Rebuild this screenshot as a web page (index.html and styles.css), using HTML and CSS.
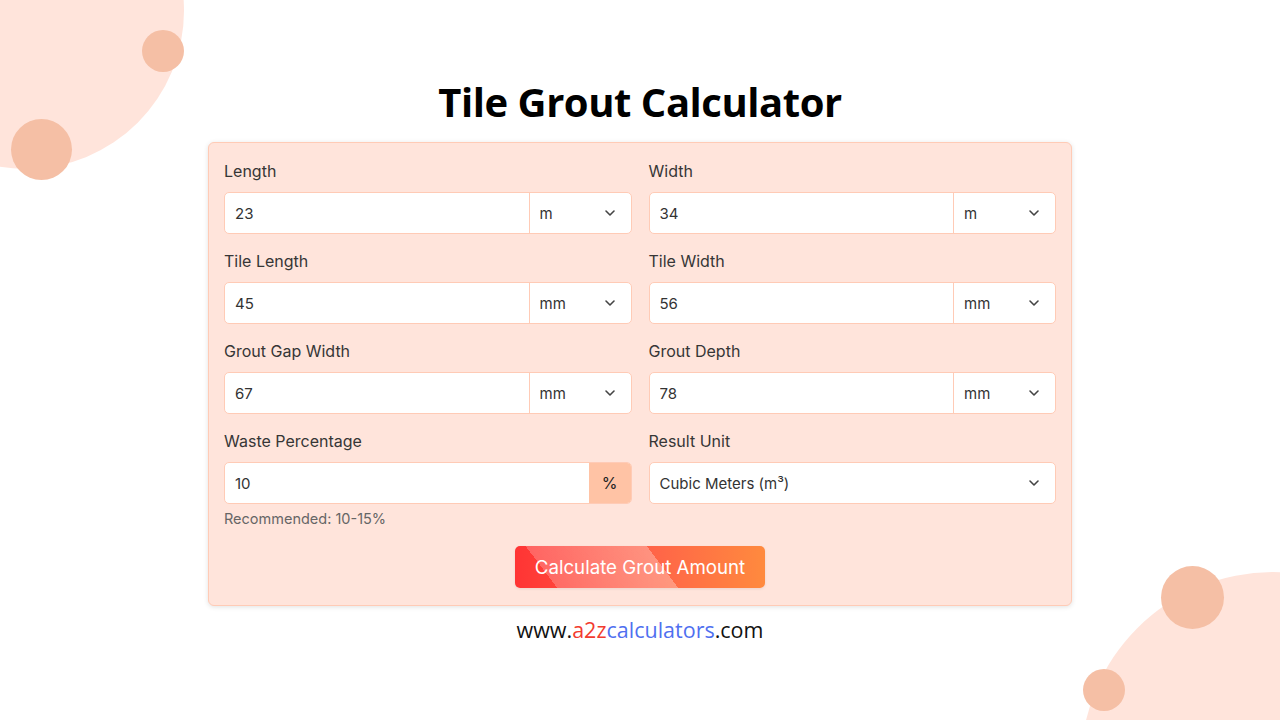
FILE: index.html
```html
<!DOCTYPE html>
<html lang="en">
<head>
  <meta charset="UTF-8" />
  <meta name="viewport" content="width=device-width, initial-scale=1.0" />
  <title>Tile Grout Calculator</title>
  <link rel="stylesheet" href="styles.css">
</head>
<body>
  <div class="decor decor-tl"></div>
  <div class="dot dot-tl-small"></div>
  <div class="dot dot-tl-big"></div>
  <div class="decor decor-br"></div>
  <div class="dot dot-br-big"></div>
  <div class="dot dot-br-small"></div>

  <main class="page">
    <h1>Tile Grout Calculator</h1>

    <form class="card" onsubmit="return false">
      <div class="grid">
        <div class="field">
          <label>Length</label>
          <div class="input-group">
            <input type="text" value="23">
            <div class="unit"><span>m</span><svg viewBox="0 0 12 12"><path d="M2 4l4 4 4-4"/></svg></div>
          </div>
        </div>
        <div class="field">
          <label>Width</label>
          <div class="input-group">
            <input type="text" value="34">
            <div class="unit"><span>m</span><svg viewBox="0 0 12 12"><path d="M2 4l4 4 4-4"/></svg></div>
          </div>
        </div>

        <div class="field">
          <label>Tile Length</label>
          <div class="input-group">
            <input type="text" value="45">
            <div class="unit"><span>mm</span><svg viewBox="0 0 12 12"><path d="M2 4l4 4 4-4"/></svg></div>
          </div>
        </div>
        <div class="field">
          <label>Tile Width</label>
          <div class="input-group">
            <input type="text" value="56">
            <div class="unit"><span>mm</span><svg viewBox="0 0 12 12"><path d="M2 4l4 4 4-4"/></svg></div>
          </div>
        </div>

        <div class="field">
          <label>Grout Gap Width</label>
          <div class="input-group">
            <input type="text" value="67">
            <div class="unit"><span>mm</span><svg viewBox="0 0 12 12"><path d="M2 4l4 4 4-4"/></svg></div>
          </div>
        </div>
        <div class="field">
          <label>Grout Depth</label>
          <div class="input-group">
            <input type="text" value="78">
            <div class="unit"><span>mm</span><svg viewBox="0 0 12 12"><path d="M2 4l4 4 4-4"/></svg></div>
          </div>
        </div>

        <div class="field">
          <label>Waste Percentage</label>
          <div class="input-group">
            <input type="text" value="10">
            <div class="addon">%</div>
          </div>
          <small class="hint">Recommended: 10-15%</small>
        </div>
        <div class="field">
          <label>Result Unit</label>
          <div class="select-box">
            <span>Cubic Meters (m³)</span>
            <svg viewBox="0 0 12 12"><path d="M2 4l4 4 4-4"/></svg>
          </div>
        </div>
      </div>

      <div class="actions">
        <button class="calc-btn" type="button">Calculate Grout Amount</button>
      </div>
    </form>

    <p class="site">www.<span class="red">a2z</span><span class="blue">calculators</span>.com</p>
  </main>
</body>
</html>
```

FILE: styles.css
```css
:root {
  --peach: #ffe4db;
  --peach-border: #ffcbb6;
  --dot: #f5bfa5;
  --addon: #ffc3a5;
  --text: #333;
  --muted: #666;
}

* { box-sizing: border-box; margin: 0; padding: 0; }

html, body {
  height: 100%;
  background: #fff;
  font-family: 'Inter', 'Noto Sans', sans-serif;
  color: var(--text);
  overflow: hidden;
}

body { position: relative; }

/* background decoration */
.decor, .dot {
  position: absolute;
  border-radius: 50%;
  z-index: 0;
}
.decor { background: var(--peach); }
.dot { background: var(--dot); }

.decor-tl { left: -132px; top: -147px; width: 316px; height: 316px; }
.decor-br { left: 1081px; top: 572px; width: 384px; height: 384px; }
.dot-tl-small { left: 142px; top: 30px; width: 42px; height: 42px; }
.dot-tl-big { left: 11px; top: 119px; width: 61px; height: 61px; }
.dot-br-big { left: 1161px; top: 566px; width: 63px; height: 63px; }
.dot-br-small { left: 1083px; top: 669px; width: 42px; height: 42px; }

.page {
  position: relative;
  z-index: 1;
  width: 864px;
  margin: 0 auto;
  padding-top: 78px;
}

h1 {
  font-family: 'Open Sans', 'Inter', sans-serif;
  font-weight: 700;
  font-size: 40px;
  line-height: 48px;
  text-align: center;
  color: #000;
  margin-bottom: 16px;
  letter-spacing: -0.45px;
}

.card {
  background: var(--peach);
  border: 1px solid var(--peach-border);
  border-radius: 6px;
  padding: 16px 15px 17px;
  box-shadow: 0 1px 5px rgba(0, 0, 0, 0.12);
}

.grid {
  display: grid;
  grid-template-columns: 1fr 1fr;
  column-gap: 17px;
  row-gap: 15px;
}

.field { display: flex; flex-direction: column; }

label {
  font-size: 16px;
  line-height: 24px;
  color: #363636;
  margin-bottom: 9px;
}

.input-group, .select-box {
  display: flex;
  height: 42px;
  background: #fff;
  border: 1px solid var(--peach-border);
  border-radius: 5px;
  overflow: hidden;
}

.input-group input {
  flex: 1;
  min-width: 0;
  border: none;
  outline: none;
  padding: 0 10px;
  font-family: inherit;
  font-size: 15px;
  color: var(--text);
  background: transparent;
}

.unit {
  width: 102px;
  display: flex;
  align-items: center;
  justify-content: space-between;
  padding: 0 15px 0 10px;
  border-left: 1px solid var(--peach-border);
  font-size: 15px;
  color: var(--text);
}

.addon {
  width: 42px;
  display: flex;
  align-items: center;
  justify-content: center;
  background: var(--addon);
  font-size: 16px;
  color: #222;
}

.select-box {
  align-items: center;
  justify-content: space-between;
  padding: 0 15px 0 10px;
  font-size: 15px;
  color: var(--text);
}

svg {
  width: 12px;
  height: 12px;
  fill: none;
  stroke: #444;
  stroke-width: 1.6;
  stroke-linecap: round;
  stroke-linejoin: round;
}

.hint {
  margin-top: 5px;
  font-size: 14.5px;
  line-height: 20px;
  color: var(--muted);
}

.actions {
  display: flex;
  justify-content: center;
  margin-top: 17px;
}

.calc-btn {
  height: 42px;
  padding: 0 20px;
  border: none;
  border-radius: 5px;
  font-family: inherit;
  font-size: 18.7px;
  color: #fff;
  cursor: pointer;
  box-shadow: 0 1px 3px rgba(0, 0, 0, 0.08);
  background:
    linear-gradient(53deg, transparent 15%, rgba(255, 255, 255, 0.22) 15%, rgba(255, 255, 255, 0.3) 58%, transparent 58%),
    linear-gradient(90deg, #ff3434, #ff6448 55%, #ff8a3e);
}

.site {
  margin-top: 12px;
  text-align: center;
  font-family: 'Open Sans', 'Inter', sans-serif;
  font-size: 21.5px;
  line-height: 24px;
  color: #111;
}
.site .red { color: #f23b2f; }
.site .blue { color: #4f6ff0; }
```
